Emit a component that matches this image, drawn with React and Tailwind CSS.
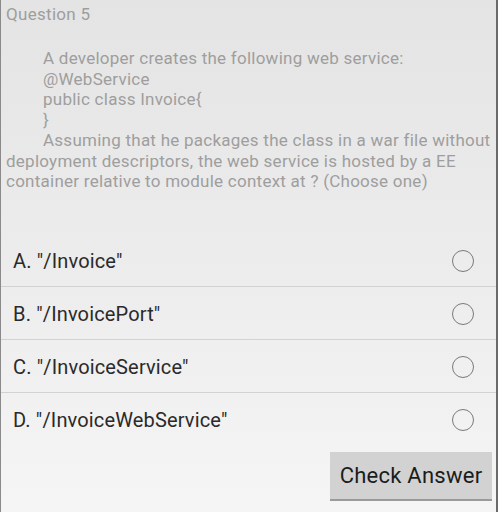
import React, { useState } from "react";

const options = [
  { key: "A", text: '"/Invoice"' },
  { key: "B", text: '"/InvoicePort"' },
  { key: "C", text: '"/InvoiceService"' },
  { key: "D", text: '"/InvoiceWebService"' },
];

// each entry is one paragraph; inner arrays are the wrapped lines as shown
const paragraphs = [
  ["A developer creates the following web service:"],
  ["@WebService"],
  ["public class Invoice{"],
  ["}"],
  [
    "Assuming that he packages the class in a war file without",
    "deployment descriptors, the web service is hosted by a EE",
    "container relative to module context at ? (Choose one)",
  ],
];

const App = () => {
  const [selected, setSelected] = useState(null);

  return (
    <div
      className="h-[512px] w-[498px] overflow-hidden border-l border-r-2 border-l-[#8a8a8a] border-r-[#6a6a6a] bg-gradient-to-b from-[#e4e4e4] via-[#ececec] to-[#f5f5f5] flex flex-col"
      style={{ fontFamily: "Roboto, 'Liberation Sans', sans-serif" }}
    >
      <div className="px-[5px] pt-[3px] text-[17px] leading-[22px] tracking-[0.3px] text-[#9e9e9e]">Question 5</div>

      <div className="mt-[23px] pl-[5px] text-[17px] leading-[20.5px] tracking-[0.25px] text-[#9e9e9e]">
        {paragraphs.map((p, i) => (
          <div key={i}>
            {p.map((l, j) => (
              <div key={j} className={`whitespace-nowrap ${j === 0 ? "pl-[37px]" : ""}`}>{l}</div>
            ))}
          </div>
        ))}
      </div>

      <div className="mt-[42px] flex flex-col">
        {options.map((o, i) => (
          <button
            key={o.key}
            onClick={() => setSelected(o.key)}
            className={`flex h-[53px] items-center justify-between pl-[12px] pr-[22px] pt-[2px] text-left ${i < 3 ? "border-b border-[#d2d2d2]" : ""}`}
          >
            <span className="text-[20px] tracking-[0.15px] text-[#2a2a2a]">{o.key}. {o.text}</span>
            <span className="flex h-[22px] w-[22px] items-center justify-center rounded-full border-[1.5px] border-[#7a7a7a]">
              {selected === o.key && <span className="h-[12px] w-[12px] rounded-full bg-[#33b5e5]" />}
            </span>
          </button>
        ))}
      </div>

      <div className="mt-[6px] flex justify-end pr-[4px]">
        <button className="h-[49px] w-[162px] border-b-2 border-[#9a9a9a] bg-[#d2d2d2] text-[22px] tracking-[0.25px] text-[#1c1c1c]">
          Check Answer
        </button>
      </div>
    </div>
  );
};

export default App;
